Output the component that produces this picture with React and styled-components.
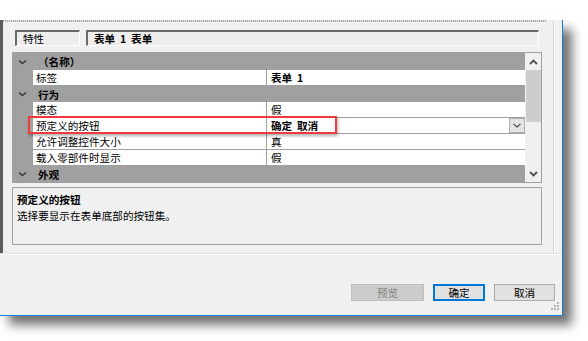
import React from "react";
import styled, { createGlobalStyle } from "styled-components";

const GlobalStyle = createGlobalStyle`
  html, body {
    margin: 0;
    padding: 0;
    background: #ffffff;
  }
  body {
    font-family: "Noto Sans CJK SC", "Liberation Sans", sans-serif;
    font-size: 10.6px;
    color: #000;
  }
`;

const Page = styled.div`
  width: 588px;
  height: 341px;
  padding-top: 20px;
  box-sizing: border-box;
  overflow: hidden;
`;

const Window = styled.div`
  width: 563px;
  height: 296px;
  display: flex;
  flex-direction: column;
  background: #f0f0f0;
  border-right: 1px solid #1a7ad4;
  border-bottom: 1px solid #1a7ad4;
  box-sizing: border-box;
  box-shadow: 9px 9px 10px rgba(0, 0, 0, 0.55);
  position: relative;
`;

const Upper = styled.div`
  height: 233px;
  display: flex;
`;

const LeftStrip = styled.div`
  width: 3px;
  background: #5c5c5c;
`;

const Pane = styled.div`
  width: 550px;
  display: flex;
  flex-direction: column;
  position: relative;
`;

const Hatch = styled.div`
  height: 2px;
  width: 544px;
  background: repeating-linear-gradient(
    90deg,
    #a8a8a8 0 1px,
    #e6e6e6 1px 2px
  );
`;

const Toolbar = styled.div`
  display: flex;
  gap: 6px;
  margin: 8px 0 0 12px;
  height: 16px;
`;

const SunkenBox = styled.div`
  width: ${({ $w }) => $w}px;
  height: 16px;
  box-sizing: border-box;
  border-top: 2px solid #6a6a6a;
  border-left: 2px solid #6a6a6a;
  border-right: 1px solid #ffffff;
  border-bottom: 1px solid #ffffff;
  background: #eeeeee;
  display: flex;
  align-items: center;
  padding-left: ${({ $pad }) => $pad}px;
  font-weight: ${({ $bold }) => ($bold ? 700 : 400)};
  line-height: 12px;
  white-space: pre;
`;

const Grid = styled.div`
  margin: 6px 0 0 9px;
  width: 530px;
  height: 131px;
  box-sizing: border-box;
  border: 1px solid #a0a0a0;
  display: flex;
`;

const Rows = styled.div`
  flex: 1;
  display: flex;
  flex-direction: column;
`;

const CatRow = styled.div`
  height: ${({ $h }) => $h || 16}px;
  background: #a0a0a0;
  display: flex;
  align-items: center;
  font-weight: 700;
  flex-shrink: 0;
`;

const Chevron = styled.svg`
  width: 9px;
  height: 6px;
  margin: 0 11px 0 5px;
`;

const PropRow = styled.div`
  height: 16px;
  display: flex;
  flex-shrink: 0;
  background: #a0a0a0;
`;

const PropName = styled.div`
  width: 234px;
  margin-left: 20px;
  background: #ffffff;
  border-bottom: 1px solid #a0a0a0;
  border-right: 1px solid #a0a0a0;
  box-sizing: border-box;
  padding-left: 3px;
  line-height: 15px;
  white-space: nowrap;
`;

const PropValue = styled.div`
  flex: 1;
  background: #ffffff;
  border-bottom: 1px solid #a0a0a0;
  box-sizing: border-box;
  padding-left: 4px;
  line-height: 15px;
  font-weight: ${({ $bold }) => ($bold ? 700 : 400)};
  display: flex;
  justify-content: space-between;
  white-space: pre;
`;

const DropButton = styled.div`
  width: 16px;
  height: 15px;
  box-sizing: border-box;
  background: #e4e4e4;
  border: 1px solid #b0b0b0;
  display: flex;
  align-items: center;
  justify-content: center;
`;

const ScrollBar = styled.div`
  width: 16px;
  background: #f0f0f0;
  display: flex;
  flex-direction: column;
  align-items: center;
`;

const ArrowBox = styled.div`
  height: 17px;
  width: 16px;
  display: flex;
  align-items: center;
  justify-content: center;
`;

const Thumb = styled.div`
  width: 15px;
  height: 52px;
  background: #cdcdcd;
`;

const Track = styled.div`
  flex: 1;
`;

const Description = styled.div`
  margin: 4px 0 0 9px;
  width: 530px;
  height: 58px;
  box-sizing: border-box;
  border: 1px solid #a0a0a0;
  padding: 4px 0 0 4px;
  line-height: 16px;
`;

const DescTitle = styled.div`
  font-weight: 700;
`;

const Divider = styled.div`
  width: 1px;
  background: #d6d6d6;
  border-right: 1px solid #ffffff;
`;

const Gutter = styled.div`
  flex: 1;
  background: #f0f0f0;
`;

const Separator = styled.div`
  height: 2px;
  border-top: 1px solid #e2e2e2;
  background: #ffffff;
  box-sizing: border-box;
`;

const Bottom = styled.div`
  flex: 1;
  display: flex;
  justify-content: flex-end;
  align-items: flex-start;
  padding: 29px 7px 0 0;
  gap: 9px;
  position: relative;
`;

const Button = styled.div`
  width: ${({ $w }) => $w}px;
  height: 17px;
  box-sizing: border-box;
  display: flex;
  align-items: center;
  justify-content: center;
  background: ${({ $disabled }) => ($disabled ? "#cccccc" : "#e1e1e1")};
  color: ${({ $disabled }) => ($disabled ? "#838383" : "#000")};
  border: ${({ $primary, $disabled }) =>
    $primary
      ? "2px solid #0078d7"
      : $disabled
      ? "1px solid #bfbfbf"
      : "1px solid #adadad"};
  line-height: 12px;
`;

const Grip = styled.svg`
  position: absolute;
  right: 3px;
  bottom: 5px;
`;

const Highlight = styled.div`
  position: absolute;
  left: 25px;
  top: 96px;
  width: 309px;
  height: 18px;
  border: 2px solid #ee3b3f;
  box-sizing: border-box;
  box-shadow: 1px 2px 3px rgba(0, 0, 0, 0.3);
  pointer-events: none;
`;

const ChevronDown = ({ color = "#3c3c3c" }) => (
  <Chevron viewBox="0 0 9 6">
    <path d="M1 1.5 L4.5 4.5 L8 1.5" fill="none" stroke={color} strokeWidth="1.6" />
  </Chevron>
);

const SmallArrow = ({ up }) => (
  <svg width="9" height="6" viewBox="0 0 9 6">
    <path
      d={up ? "M1 5 L4.5 1.5 L8 5" : "M1 1 L4.5 4.5 L8 1"}
      fill="none"
      stroke="#505050"
      strokeWidth="1.8"
    />
  </svg>
);

const Category = ({ label, h }) => (
  <CatRow $h={h}>
    <ChevronDown />
    {label}
  </CatRow>
);

const Prop = ({ name, value, bold, drop }) => (
  <PropRow>
    <PropName>{name}</PropName>
    <PropValue $bold={bold}>
      {value}
      {drop && (
        <DropButton>
          <svg width="8" height="5" viewBox="0 0 8 5">
            <path d="M0.5 0.8 L4 4 L7.5 0.8" fill="none" stroke="#404040" strokeWidth="1.1" />
          </svg>
        </DropButton>
      )}
    </PropValue>
  </PropRow>
);

export default function App() {
  return (
    <Page>
      <GlobalStyle />
      <Window>
        <Upper>
          <LeftStrip />
          <Pane>
            <Hatch />
            <Toolbar>
              <SunkenBox $w={65} $pad={6}>特性</SunkenBox>
              <SunkenBox $w={453} $pad={6} $bold>
                {"表单  1  表单"}
              </SunkenBox>
            </Toolbar>
            <Grid>
              <Rows>
                <Category label="（名称）" h={17} />
                <Prop name="标签" value={"表单  1"} bold />
                <Category label="行为" />
                <Prop name="模态" value="假" />
                <Prop name="预定义的按钮" value={"确定  取消"} bold drop />
                <Prop name="允许调整控件大小" value="真" />
                <Prop name="载入零部件时显示" value="假" />
                <Category label="外观" />
              </Rows>
              <ScrollBar>
                <ArrowBox>
                  <SmallArrow up />
                </ArrowBox>
                <Thumb />
                <Track />
                <ArrowBox>
                  <SmallArrow />
                </ArrowBox>
              </ScrollBar>
            </Grid>
            <Description>
              <DescTitle>预定义的按钮</DescTitle>
              <div>选择要显示在表单底部的按钮集。</div>
            </Description>
            <Highlight />
          </Pane>
          <Divider />
          <Gutter />
        </Upper>
        <Separator />
        <Bottom>
          <Button $w={73} $disabled>预览</Button>
          <Button $w={52} $primary>确定</Button>
          <Button $w={61}>取消</Button>
          <Grip width="8" height="8" viewBox="0 0 8 8">
            <rect x="6" y="0" width="2" height="2" fill="#b8b8b8" />
            <rect x="3" y="3" width="2" height="2" fill="#b8b8b8" />
            <rect x="6" y="3" width="2" height="2" fill="#b8b8b8" />
            <rect x="0" y="6" width="2" height="2" fill="#b8b8b8" />
            <rect x="3" y="6" width="2" height="2" fill="#b8b8b8" />
            <rect x="6" y="6" width="2" height="2" fill="#b8b8b8" />
          </Grip>
        </Bottom>
      </Window>
    </Page>
  );
}
